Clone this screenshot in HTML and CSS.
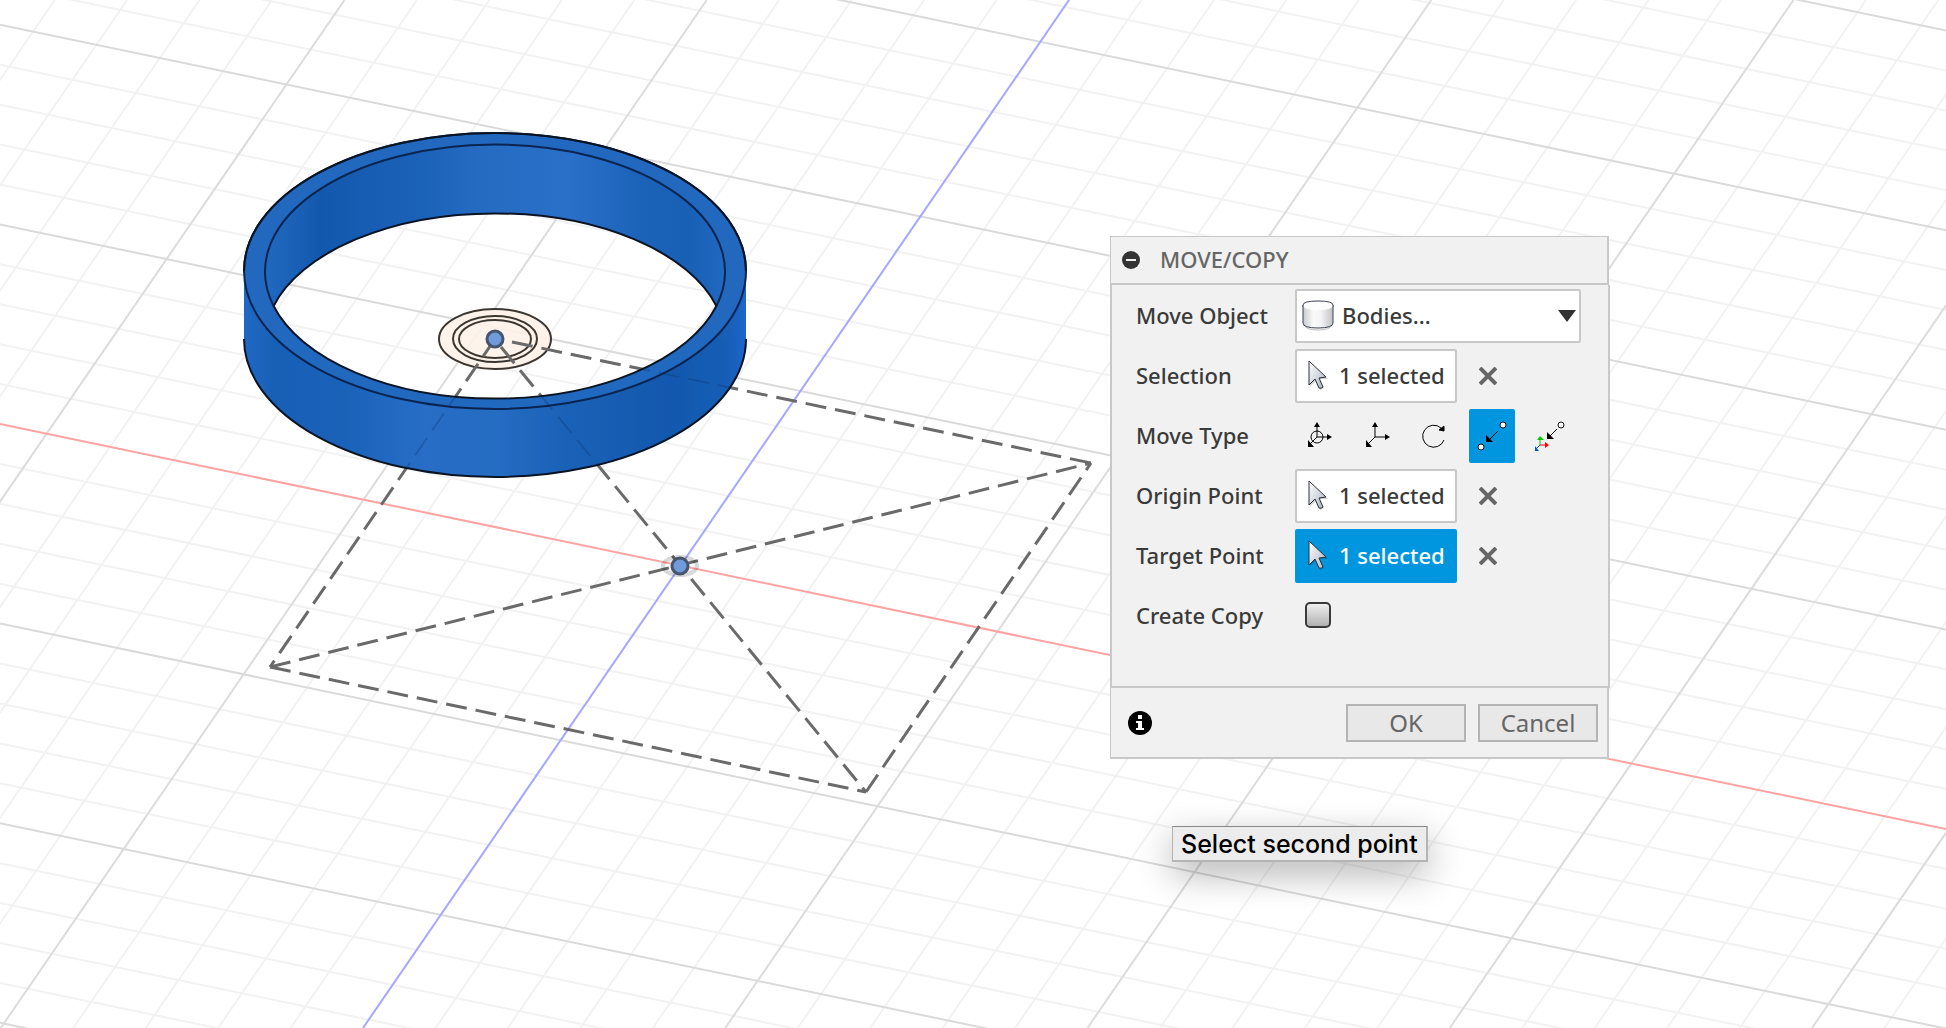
FILE: index.html
```
<!DOCTYPE html>
<html lang="en">
<head>
<meta charset="utf-8">
<meta name="viewport" content="width=device-width, initial-scale=1">
<title>Move/Copy</title>
<link rel="stylesheet" href="styles.css">
</head>
<body>
<main class="viewport">

<svg class="scene" viewBox="0 0 1946 1028" preserveAspectRatio="xMinYMin slice" aria-hidden="true">
	<defs>
		<linearGradient id="wallOut" gradientUnits="userSpaceOnUse" x1="244" y1="0" x2="746" y2="0">
			<stop offset="0" stop-color="#2068c4"/>
			<stop offset=".06" stop-color="#1960b6"/>
			<stop offset=".2" stop-color="#1b62b9"/>
			<stop offset=".36" stop-color="#286ec6"/>
			<stop offset=".5" stop-color="#266cc3"/>
			<stop offset=".64" stop-color="#1b62b8"/>
			<stop offset=".85" stop-color="#1359ae"/>
			<stop offset=".96" stop-color="#175eb6"/>
			<stop offset="1" stop-color="#1c66cc"/>
		</linearGradient>
		<linearGradient id="wallIn" gradientUnits="userSpaceOnUse" x1="265" y1="0" x2="725" y2="0">
			<stop offset="0" stop-color="#2168c0"/>
			<stop offset=".12" stop-color="#1259ae"/>
			<stop offset=".35" stop-color="#1b62b9"/>
			<stop offset=".46" stop-color="#256bc2"/>
			<stop offset=".66" stop-color="#2a70c8"/>
			<stop offset=".82" stop-color="#1b62b9"/>
			<stop offset=".92" stop-color="#1860b6"/>
			<stop offset="1" stop-color="#2168c0"/>
		</linearGradient>
		<clipPath id="ringClip">
			<path clip-rule="evenodd" d="M244 271A251 138 0 0 1 746 271V339A251 138 0 0 1 244 339ZM273.6 306A230 127 0 0 1 716.4 306A230 127 0 0 1 273.6 306Z"/>
		</clipPath>
		<g id="sketch">
			<path d="M512 342L1091 463"/>
			<path d="M495 339L270 667"/>
			<path d="M270 667L866 792"/>
			<path d="M866 792L1091 463"/>
			<path d="M501 347L866 792"/>
			<path d="M270 667L1091 463"/>
		</g>
	</defs>

	<g id="grid"></g>
	<path class="axis_x" d="M0 424L1946 829"/>
	<path class="axis_z" d="M1069 0L363 1028"/>

	<!-- disc -->
	<g class="disc">
		<ellipse class="disc_face" cx="495" cy="339" rx="56" ry="30"/>
		<ellipse cx="495" cy="339" rx="42" ry="23"/>
		<ellipse cx="495" cy="339" rx="36" ry="19"/>
	</g>
	<use href="#sketch" class="sketch"/>

	<!-- ring body -->
	<path fill="url(#wallOut)" d="M244 271V339A251 138 0 0 0 746 339V271A251 138 0 0 1 244 271Z"/>
	<path fill="url(#wallIn)" d="M273.6 306A230 127 0 1 1 716.4 306A230 127 0 0 0 273.6 306Z"/>
	<path class="ring_top" fill-rule="evenodd" d="M244 271A251 138 0 0 1 746 271A251 138 0 0 1 244 271ZM265 272A230 127 0 0 1 725 272A230 127 0 0 1 265 272Z"/>
	<g class="ring_edge">
		<ellipse cx="495" cy="271" rx="251" ry="138" stroke="#0a2550"/>
		<path d="M273.6 306A230 127 0 1 1 716.4 306" stroke="#0a2550"/>
		<path d="M244 271A251 138 0 0 1 746 271"/>
		<path d="M273.6 306A230 127 0 0 0 716.4 306"/>
		<path d="M273.6 306A230 127 0 0 1 716.4 306"/>
		<path d="M244 339A251 138 0 0 0 746 339"/>
	</g>
	<g clip-path="url(#ringClip)"><use href="#sketch" class="sketch sketch_hidden"/></g>

	<!-- snap points -->
	<circle class="snap" cx="495" cy="339" r="8"/>
	<ellipse class="halo" cx="680" cy="566" rx="17" ry="9"/>
	<circle class="snap" cx="680" cy="566" r="8"/>
</svg>

<form class="panel" onsubmit="return false;">
	<header class="panel_head">
		<button type="button" class="btn_icon" aria-label="Collapse">
			<svg width="20" height="20" viewBox="0 0 20 20"><circle cx="10" cy="10" r="9" fill="#333"/><path d="M5 10H15" stroke="#f1f1f1" stroke-width="2"/></svg>
		</button>
		<h1>MOVE/COPY</h1>
	</header>

	<div class="panel_body">
		<div class="row">
			<label for="move_object">Move Object</label>
			<div class="dropdown">
				<svg class="dropdown_icon" width="32" height="32" viewBox="0 0 32 32">
					<defs><linearGradient id="cyl"><stop offset="0" stop-color="#c8cace"/><stop offset=".35" stop-color="#fafafa"/><stop offset=".6" stop-color="#f4f4f5"/><stop offset="1" stop-color="#bfc1c6"/></linearGradient></defs>
					<path d="M2 26Q4 31 16 31T30 26" fill="none" stroke="#bbb"/>
					<path d="M1 6V24Q1 29 16 29T31 24V6Z" fill="url(#cyl)" stroke="#3c4250"/>
					<path d="M1 6Q1 2 16 2T31 6Q31 11 16 11T1 6Z" fill="#fdfdfd"/>
					<path d="M1 8V6Q1 2 16 2T31 6V8" fill="none" stroke="#3c4250"/>
				</svg>
				<select id="move_object"><option>Bodies...</option></select>
				<svg class="dropdown_arrow" width="18" height="12" viewBox="0 0 18 12"><path d="M0 0H18L9 12Z" fill="#333"/></svg>
			</div>
		</div>
		<div class="row">
			<label for="selection">Selection</label>
			<button type="button" id="selection" class="btn_select"><svg class="cursor" viewBox="0 0 20 32"><use href="#cursor"/></svg>1 selected</button>
			<button type="button" class="btn_clear" aria-label="Clear selection"><svg width="18" height="18" viewBox="0 0 18 18"><path d="M1 1L17 17M17 1L1 17"/></svg></button>
		</div>
		<div class="row">
			<span class="row_label" id="move_type">Move Type</span>
			<div class="types" role="group" aria-labelledby="move_type">
				<button type="button" class="btn_type" aria-label="Free Move">
					<svg viewBox="0 0 46 54"><use href="#triad"/><circle cx="22" cy="28" r="6" fill="none" stroke="#000"/></svg>
				</button>
				<button type="button" class="btn_type" aria-label="Translate">
					<svg viewBox="0 0 46 54"><use href="#triad"/></svg>
				</button>
				<button type="button" class="btn_type" aria-label="Rotate">
					<svg viewBox="0 0 46 54"><path d="M33 31A11 11 0 1 1 30 19" fill="none" stroke="#000"/><path d="M28 21L33 17V22Z" stroke="#000"/></svg>
				</button>
				<button type="button" class="btn_type active" aria-label="Point to Point" aria-pressed="true">
					<svg viewBox="0 0 46 54"><path d="M29 22L20 31" stroke="#000"/><path d="M17 26V33H24Z"/><g fill="#fff" stroke="#111"><circle cx="34" cy="16" r="3"/><circle cx="12" cy="38" r="3"/></g></svg>
				</button>
				<button type="button" class="btn_type" aria-label="Point to Position">
					<svg viewBox="0 0 46 54"><path d="M30 20L23 27" stroke="#000"/><path d="M20 23V30H27Z"/><circle cx="34" cy="16" r="3" fill="#fff" stroke="#111"/><path d="M13 36V30" stroke="#0c0" stroke-width="1"/><path d="M10 31L13 27L17 31Z" fill="#0c0"/><path d="M13 36H18" stroke="#f00"/><path d="M18 33L22 36L18 39Z" fill="#f00"/><path d="M13 36L9 40" stroke="#0a5cb8"/><path d="M8 37V42H12Z" fill="#0a5cb8"/></svg>
				</button>
			</div>
		</div>
		<div class="row">
			<label for="origin_point">Origin Point</label>
			<button type="button" id="origin_point" class="btn_select"><svg class="cursor" viewBox="0 0 20 32"><use href="#cursor"/></svg>1 selected</button>
			<button type="button" class="btn_clear" aria-label="Clear origin point"><svg width="18" height="18" viewBox="0 0 18 18"><path d="M1 1L17 17M17 1L1 17"/></svg></button>
		</div>
		<div class="row">
			<label for="target_point">Target Point</label>
			<button type="button" id="target_point" class="btn_select active"><svg class="cursor" viewBox="0 0 20 32"><use href="#cursor"/></svg>1 selected</button>
			<button type="button" class="btn_clear" aria-label="Clear target point"><svg width="18" height="18" viewBox="0 0 18 18"><path d="M1 1L17 17M17 1L1 17"/></svg></button>
		</div>
		<div class="row">
			<label for="create_copy">Create Copy</label>
			<input type="checkbox" id="create_copy">
		</div>
	</div>

	<footer class="panel_foot">
		<button type="button" class="btn_icon btn_info" aria-label="Information">
			<svg width="24" height="24" viewBox="0 0 24 24"><circle cx="12" cy="12" r="12"/><path d="M10 4H14V8H10ZM8 10H14V17H16V19H8V17H10V12H8Z" fill="#fff"/></svg>
		</button>
		<button type="submit" class="btn">OK</button>
		<button type="button" class="btn">Cancel</button>
	</footer>
</form>

<div class="tooltip" role="tooltip">Select second point</div>

</main>

<!-- shared icon shapes -->
<svg width="0" height="0" class="shapes" aria-hidden="true">
	<defs>
		<linearGradient id="cursorFill" x1="0" y1="0" x2="1" y2="1"><stop offset="0" stop-color="#fff"/><stop offset="1" stop-color="#aeb4c4"/></linearGradient>
		<g id="cursor">
			<path d="M2 3V27L8 22L12 31L16 29L12 20L20 20Z" fill="#000" opacity=".2"/>
			<path d="M1 2V26L7 20L11 29Q13 30 15 28L11 19L18 18Z" fill="url(#cursorFill)" stroke="#2c3038"/>
		</g>
		<g id="triad">
			<path d="M22 18V28H33M22 28L15 35" fill="none" stroke="#000"/>
			<path d="M19 18L22 13L25 18ZM32 25L37 28L32 31ZM13 31V38H19Z"/>
		</g>
	</defs>
</svg>

<script>
// ground grid: every fifth line is a major one, line 0 is the axis
var svgNS = "http://www.w3.org/2000/svg";
var grid = document.getElementById("grid");

function addLine(x1, y1, x2, y2, cls)
{
	var line = document.createElementNS(svgNS, "line");
	line.setAttribute("x1", x1);
	line.setAttribute("y1", y1);
	line.setAttribute("x2", x2);
	line.setAttribute("y2", y2);
	line.setAttribute("class", cls);
	grid.appendChild(line);
}

function drawGrid(major)
{
	var i, off;
	for (i = -25; i <= 25; i++) {
		if (i == 0 || (i % 5 == 0) != major) continue;
		off = i * 39.92;
		addLine(0, 424 + off, 1946, 829 + off, major ? "row_major" : "row_minor");
		off = i * 72.45;
		addLine(1069 + off, 0, 363 + off, 1028, major ? "col_major" : "col_minor");
	}
}

drawGrid(false);
drawGrid(true);
</script>
</body>
</html>
```
FILE: styles.css
```
* {
	box-sizing: border-box;
}

body {
	margin: 0;
	background: #fff;
	font-family: "Noto Sans", "Open Sans", sans-serif;
	color: #3a3a3a;
}

.viewport {
	position: relative;
	min-height: 100vh;
	overflow: hidden;
}

.scene {
	position: absolute;
	top: 0;
	left: 0;
	width: 100%;
	height: 100%;
}

.shapes {
	position: absolute;
}

/* grid and axes */
.row_minor { stroke: #f2f2f2; stroke-width: 2; }
.row_major { stroke: #dadada; stroke-width: 2; }
.col_minor { stroke: #f2f2f2; stroke-width: 2; }
.col_major { stroke: #dcdcdc; stroke-width: 2; }
.axis_x { stroke: #ffa2a2; stroke-width: 2; }
.axis_z { stroke: #a6a6ff; stroke-width: 2; }

/* sketch lines and bodies */
.sketch {
	fill: none;
	stroke: #6a6a6a;
	stroke-width: 3;
	stroke-dasharray: 21 9;
}
.sketch_hidden {
	stroke: #0b2a5c;
	stroke-width: 2;
	opacity: .25;
}
.disc {
	fill: none;
	stroke: #3c3631;
	stroke-width: 2;
}
.disc_face { fill: #fdf2e8; fill-opacity: .9; }
.ring_top { fill: #2268bf; }
.ring_edge {
	fill: none;
	stroke: #0a1424;
	stroke-width: 2;
}
.snap {
	fill: #6f9bdc;
	stroke: #46556e;
	stroke-width: 3;
}
.halo {
	fill: none;
	stroke: #000;
	stroke-width: 4;
	opacity: .15;
}

/* dialog */
.panel {
	position: absolute;
	top: 236px;
	left: 1110px;
	width: 500px;
	font-size: 22px;
	line-height: 30px;
}

.panel button {
	margin: 0;
	padding: 0;
	border: 0;
	background: none;
	font-family: inherit;
	color: inherit;
}

.panel svg {
	display: block;
}

.panel_head {
	display: flex;
	align-items: center;
	gap: 19px;
	height: 49px;
	margin-right: 1px;
	padding-left: 10px;
	background: #f1f1f1;
	border: 1px solid #c8c8c8;
	border-right-width: 2px;
	border-bottom-width: 2px;
}

.panel_head h1 {
	margin: 0;
	padding-bottom: 2px;
	font-size: 22px;
	font-weight: 500;
	color: #666;
}

.panel_body {
	display: flex;
	flex-direction: column;
	gap: 6px;
	height: 403px;
	padding: 4px 24px;
	background: #f1f1f1;
	border: 2px solid #c8c8c8;
	border-top: 0;
}

.row {
	display: flex;
	align-items: center;
	height: 54px;
}

.row label,
.row_label {
	flex: none;
	width: 159px;
	padding-bottom: 2px;
	font-weight: 500;
}

.dropdown {
	position: relative;
	width: 286px;
}

.dropdown select {
	display: block;
	width: 100%;
	height: 54px;
	padding: 0 36px 2px 45px;
	border: 2px solid #c8c8c8;
	border-radius: 2px;
	background: #fff;
	-webkit-appearance: none;
	appearance: none;
	font-family: inherit;
	font-size: 22px;
	font-weight: 500;
	color: inherit;
}

.dropdown_icon {
	position: absolute;
	top: 10px;
	left: 7px;
}

.dropdown_arrow {
	position: absolute;
	top: 21px;
	right: 5px;
}

.panel .btn_select {
	display: flex;
	align-items: center;
	gap: 11px;
	width: 162px;
	height: 54px;
	padding: 0 0 2px 11px;
	border: 2px solid #c8c8c8;
	border-radius: 2px;
	background: #fff;
	font-size: 22px;
	font-weight: 500;
	white-space: nowrap;
}

.panel .btn_select.active {
	border-color: #0096df;
	background: #0096df;
	color: #fff;
}

.cursor {
	width: 20px;
	height: 32px;
}

.panel .btn_clear {
	margin-left: 12px;
	width: 38px;
	height: 38px;
}

.btn_clear svg {
	margin: 0 auto;
	stroke: #666;
	stroke-width: 4;
}

.types {
	display: flex;
	gap: 12px;
}

.btn_type {
	width: 46px;
	height: 54px;
}

.panel .btn_type.active {
	border-radius: 2px;
	background: #0096df;
}

#create_copy {
	width: 26px;
	height: 26px;
	margin: 0 0 2px 10px;
	border: 2px solid #3a3a3a;
	border-radius: 5px;
	background: linear-gradient(#f0f0f0, #b0b0b0);
	-webkit-appearance: none;
	appearance: none;
}

.panel_foot {
	display: flex;
	align-items: center;
	gap: 12px;
	height: 71px;
	margin-right: 1px;
	padding: 0 9px 0 17px;
	background: #f1f1f1;
	border: 1px solid #c8c8c8;
	border-top: 0;
	border-right-width: 2px;
	border-bottom-width: 2px;
}

.panel .btn_info {
	margin-right: auto;
}

.panel .btn {
	width: 120px;
	height: 38px;
	border: 2px solid #b4b4b4;
	background: #e8e8e8;
	font-size: 24px;
	line-height: 30px;
	color: #666;
}

.tooltip {
	position: absolute;
	top: 826px;
	left: 1172px;
	padding: 2px 8px 0;
	height: 36px;
	border: 1px solid #b4b4b4;
	border-top-color: #888;
	border-right-width: 2px;
	border-bottom-width: 2px;
	background: #ececec;
	box-shadow: 0 12px 36px rgba(0, 0, 0, .3);
	font-family: Inter, Roboto, sans-serif;
	font-size: 25px;
	font-weight: 500;
	line-height: 30px;
	white-space: nowrap;
	color: #000;
}
```
